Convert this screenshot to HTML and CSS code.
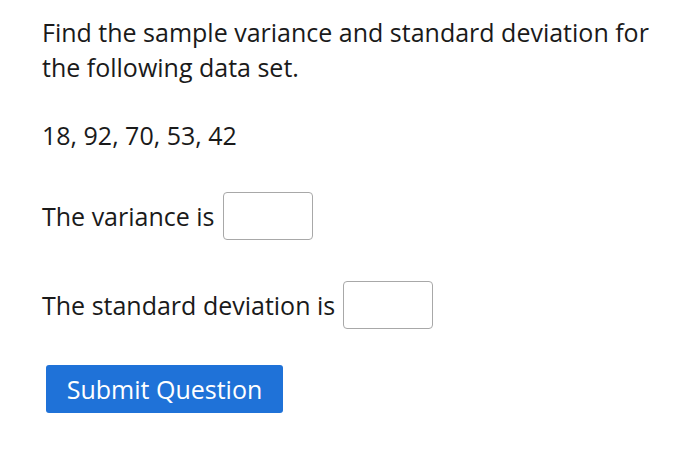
FILE: index.html
```html
<!DOCTYPE html>
<html>
<head>
<meta charset="utf-8">
<link rel="stylesheet" href="styles.css">
</head>
<body>
<div class="question">
  <p class="prompt">Find the sample variance and standard deviation for the following data set.</p>
  <p class="data">18, 92, 70, 53, 42</p>
  <div class="answer-row"><span>The variance is</span><span class="input"></span></div>
  <div class="answer-row second"><span>The standard deviation is</span><span class="input"></span></div>
  <button class="submit">Submit Question</button>
</div>
</body>
</html>
```
FILE: styles.css
```css
html, body {
  margin: 0;
  padding: 0;
  background: #fff;
}
body {
  font-family: "Open Sans", sans-serif;
  color: #1a1a1a;
}
.question {
  padding: 15px 0 0 42px;
  font-size: 25px;
  line-height: 35px;
}
.prompt {
  margin: 0;
  width: 620px;
}
.data {
  margin: 33px 0 0 0;
}
.answer-row {
  display: flex;
  align-items: center;
  margin-top: 39px;
}
.answer-row.second {
  margin-top: 41px;
}
.input {
  display: inline-block;
  width: 88px;
  height: 46px;
  margin-left: 8px;
  border: 1px solid #a8a8a8;
  border-radius: 4px;
}
.submit {
  display: block;
  margin: 36px 0 0 4px;
  width: 237px;
  height: 48px;
  background: #1f72d8;
  color: #fff;
  border: none;
  border-radius: 3px;
  font-family: "Open Sans", sans-serif;
  font-size: 25px;
  padding: 0;
}
```
